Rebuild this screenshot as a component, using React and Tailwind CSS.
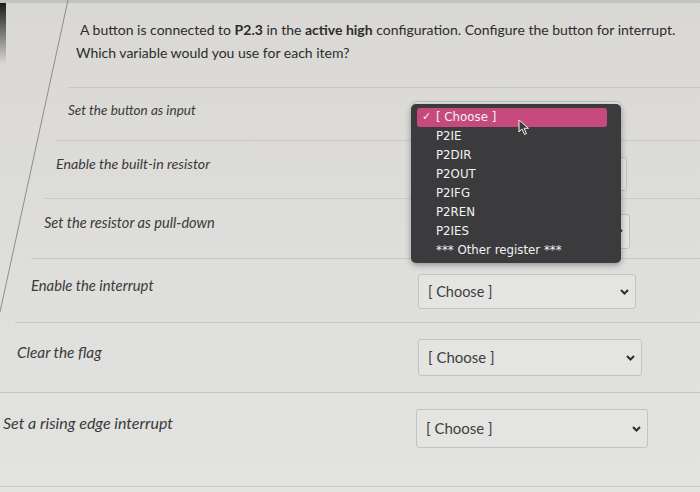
const rows = [
  {
    label: "Set the button as input",
    covered: true,
    row: "ml-[68px] h-[53px]",
    lab: "w-[345px] pt-[13px] text-[13.5px] leading-[18px]",
    sel: "mt-[13px] w-[208px] h-[31px] text-[14px]",
  },
  {
    label: "Enable the built-in resistor",
    covered: true,
    row: "ml-[55px] h-[58px]",
    lab: "w-[360px] pt-[14px] pl-[1px] text-[14.2px] leading-[18px]",
    sel: "mt-[16px] w-[212px] h-[34px] text-[14px]",
  },
  {
    label: "Set the resistor as pull-down",
    covered: true,
    row: "ml-[44px] h-[60px]",
    lab: "w-[372px] pt-[15px] text-[14.6px] leading-[18px]",
    sel: "mt-[15px] w-[214px] h-[35px] text-[14.5px]",
  },
  {
    label: "Enable the interrupt",
    row: "ml-[31px] h-[64px]",
    lab: "w-[387px] pt-[17px] text-[14.8px] leading-[18px]",
    sel: "mt-[15px] w-[218px] h-[35px] text-[14.5px]",
  },
  {
    label: "Clear the flag",
    row: "ml-[15px] h-[70px]",
    lab: "w-[403px] pt-[20px] pl-[2px] text-[15.3px] leading-[18px]",
    sel: "mt-[16px] w-[224px] h-[37px] text-[15px]",
  },
  {
    label: "Set a rising edge interrupt",
    row: "ml-0 h-[95px] border-b",
    lab: "w-[416px] pt-[21px] pl-[3px] text-[16px] leading-[18px]",
    sel: "mt-[16px] w-[232px] h-[39px] text-[15px]",
  },
]

const options = ["P2IE", "P2DIR", "P2OUT", "P2IFG", "P2REN", "P2IES", "*** Other register ***"]

const Chevron = () => (
  <svg width="9" height="6" viewBox="0 0 9 6" className="shrink-0">
    <polyline points="1,1 4.5,4.5 8,1" fill="none" stroke="#2e2e2e" strokeWidth="2" />
  </svg>
)

export default function App() {
  return (
    <div className="relative w-[700px] h-[492px] overflow-hidden bg-gradient-to-b from-[#d9d8d5] to-[#e3e3e1] font-['Lato',sans-serif] text-[#333]">
      {/* bezel in the corner and the slanted page edge */}
      <div className="absolute left-0 top-0 w-[6px] h-[64px] bg-gradient-to-b from-[#111] to-[#55555500]" />
      <div className="absolute left-0 top-0 w-full h-[3px] bg-[#c2c2c0]" />
      <svg className="absolute left-0 top-0" width="80" height="320">
        <line x1="68" y1="0" x2="0" y2="312" stroke="#8d8d8b" strokeWidth="1" />
      </svg>

      <div className="pt-[21px] pl-[80px] text-[14px] leading-[18px] text-[#2c2c2c]">
        <p>
          A button is connected to <b>P2.3</b> in the <b>active high</b> configuration. Configure the button for
          interrupt.
        </p>
        <p className="mt-[5px] -ml-[4px]">Which variable would you use for each item?</p>
      </div>

      <div className="mt-[25px]">
        {rows.map((r) => (
          <div key={r.label} className={`flex border-t border-[#c7c7c5] ${r.row}`}>
            <div className={`shrink-0 italic text-[#3a3a3a] ${r.lab}`}>{r.label}</div>
            <div
              className={`flex items-center justify-between pl-[9px] pr-[6px] border border-[#c3c3c1] rounded-[3px] bg-[#e4e4e2] text-[#3e3e3e] ${r.sel}`}
            >
              <span>{r.covered ? "" : "[ Choose ]"}</span>
              <Chevron />
            </div>
          </div>
        ))}
      </div>

      {/* open dropdown menu */}
      <div className="absolute left-[411px] top-[104px] w-[210px] h-[159px] rounded-[5px] bg-[#3b3b3d] shadow-[0_2px_6px_rgba(0,0,0,0.35)] pt-[4px] pl-[6px] pr-[14px] font-['DejaVu_Sans',sans-serif] text-[11.8px] text-[#f2f2f2]">
        <div className="flex items-center h-[19px] rounded-[3px] bg-[#c64a7d] pl-[5px]">
          <span className="w-[14px] text-[11px] font-bold">✓</span>
          <span>[ Choose ]</span>
        </div>
        {options.map((o) => (
          <div key={o} className="flex items-center h-[19px] pl-[19px]">
            {o}
          </div>
        ))}
      </div>

      {/* mouse pointer */}
      <svg className="absolute left-[518px] top-[119px]" width="12" height="17" viewBox="0 0 12 17">
        <path d="M1 1 L1 13 L4 10 L6.5 15.5 L8.5 14.6 L6 9.3 L10.5 9.3 Z" fill="#3a3a3a" stroke="#f4f4f4" strokeWidth="1" />
      </svg>
    </div>
  )
}
